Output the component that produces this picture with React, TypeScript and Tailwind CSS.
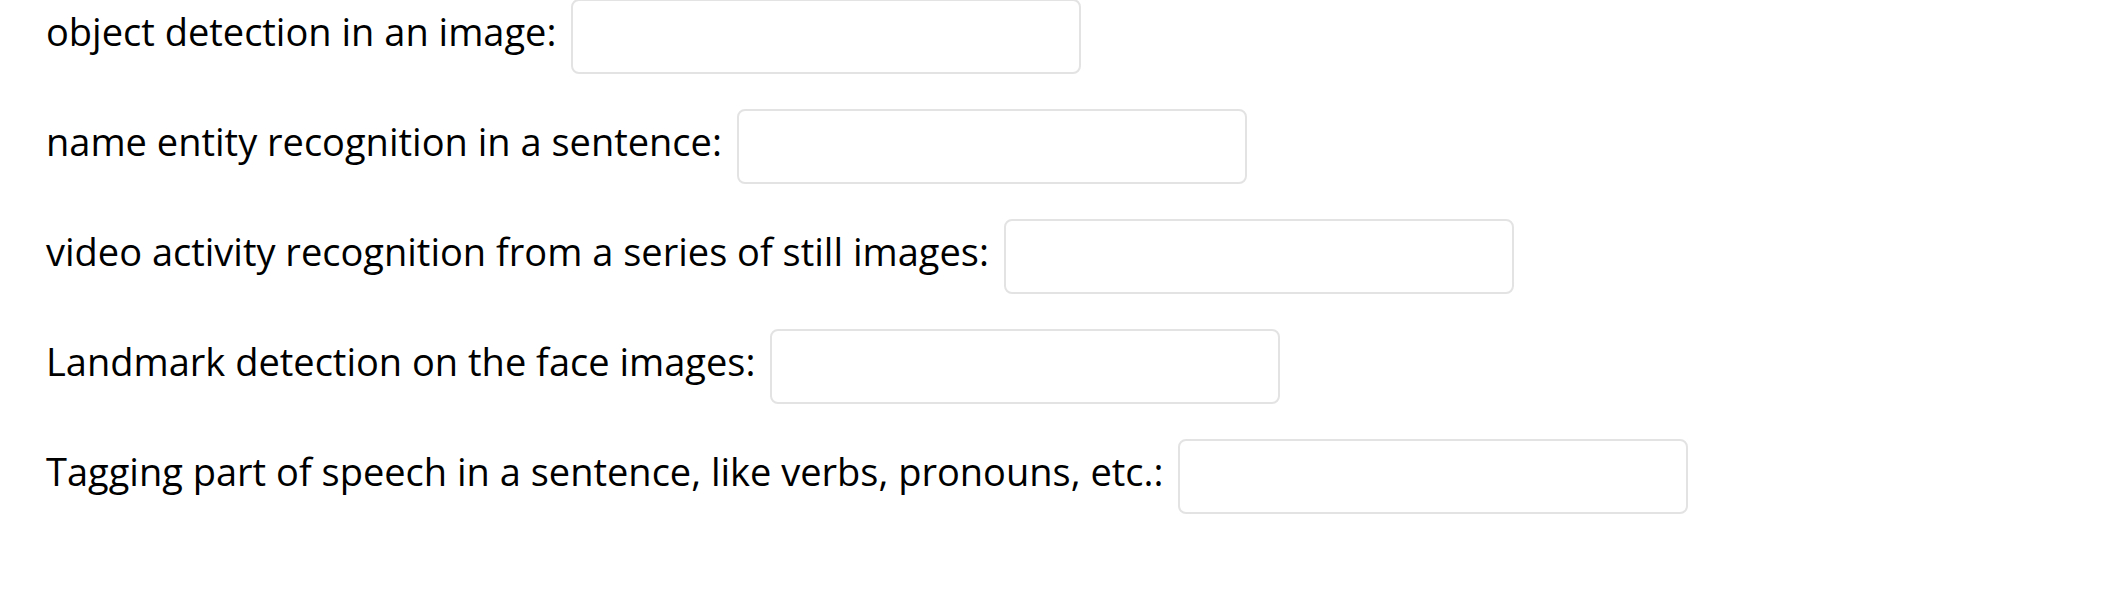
const QUESTIONS = [
  'object detection in an image:',
  'name entity recognition in a sentence:',
  'video activity recognition from a series of still images:',
  'Landmark detection on the face images:',
  'Tagging part of speech in a sentence, like verbs, pronouns, etc.:',
];

export default function App() {
  return (
    <div className="min-h-screen bg-white text-black font-['Open_Sans',sans-serif]">
      <div className="mt-[-1px] pl-[46px] flex flex-col gap-[35px]">
        {QUESTIONS.map((q) => (
          <div key={q} className="flex items-center gap-[15px]">
            <label className="text-[38px] leading-[52px] pb-[12px] whitespace-nowrap">{q}</label>
            <input
              type="text"
              className="w-[510px] h-[75px] rounded-[8px] border-2 border-[#e3e3e3] bg-white outline-none"
            />
          </div>
        ))}
      </div>
    </div>
  );
}
